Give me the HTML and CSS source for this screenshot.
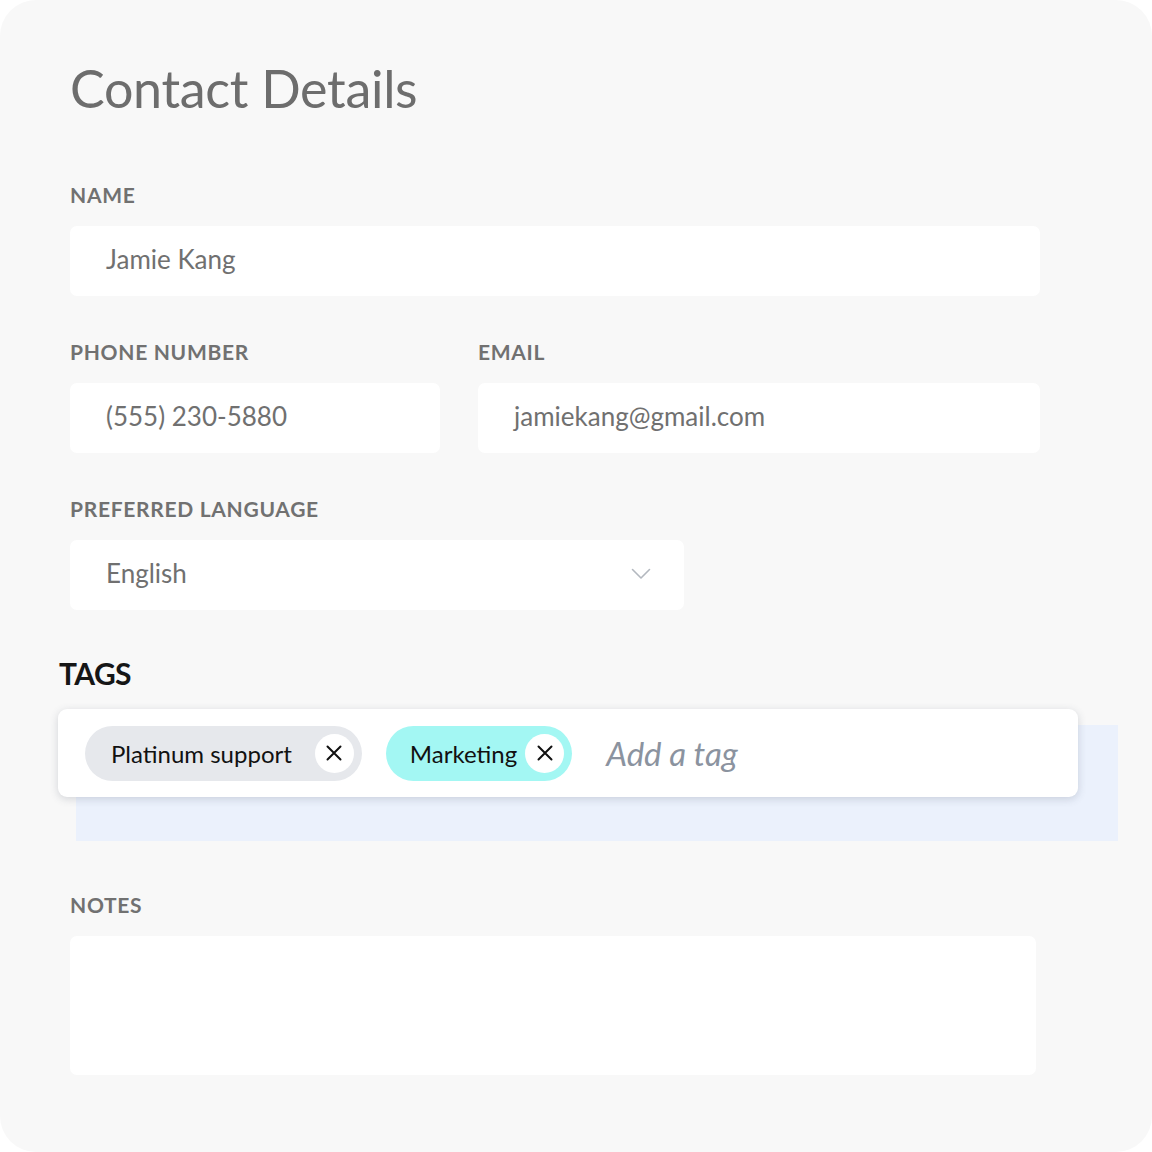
FILE: index.html
```html
<!DOCTYPE html>
<html lang="en">
<head>
<meta charset="utf-8">
<title>Contact Details</title>
<link rel="stylesheet" href="styles.css">
</head>
<body>
<div class="card">
  <h1 class="title">Contact Details</h1>

  <div class="field">
    <div class="label">NAME</div>
    <div class="input input-name">Jamie Kang</div>
  </div>

  <div class="row">
    <div class="field field-phone">
      <div class="label">PHONE NUMBER</div>
      <div class="input">(555) 230-5880</div>
    </div>
    <div class="field field-email">
      <div class="label">EMAIL</div>
      <div class="input">jamiekang@gmail.com</div>
    </div>
  </div>

  <div class="field">
    <div class="label">PREFERRED LANGUAGE</div>
    <div class="input select">
      <span>English</span>
      <svg class="chevron" width="20" height="12" viewBox="0 0 20 12" aria-hidden="true">
        <path d="M1.5 1.5 L10 10 L18.5 1.5" fill="none" stroke="#b3b8bf" stroke-width="1.6" stroke-linecap="round" stroke-linejoin="round"/>
      </svg>
    </div>
  </div>

  <div class="tags">
    <div class="tags-label">TAGS</div>
    <div class="tagbox-wrap">
      <div class="drop-zone"></div>
      <div class="tagbox">
        <div class="chip chip-gray">
          <span class="chip-text">Platinum support</span>
          <span class="chip-x">
            <svg width="16" height="16" viewBox="0 0 16 16" aria-hidden="true"><path d="M1.5 1.5 L14.5 14.5 M14.5 1.5 L1.5 14.5" stroke="#111" stroke-width="2" stroke-linecap="round"/></svg>
          </span>
        </div>
        <div class="chip chip-cyan">
          <span class="chip-text">Marketing</span>
          <span class="chip-x">
            <svg width="16" height="16" viewBox="0 0 16 16" aria-hidden="true"><path d="M1.5 1.5 L14.5 14.5 M14.5 1.5 L1.5 14.5" stroke="#111" stroke-width="2" stroke-linecap="round"/></svg>
          </span>
        </div>
        <span class="add-tag">Add a tag</span>
      </div>
    </div>
  </div>

  <div class="field">
    <div class="label">NOTES</div>
    <div class="input notes"></div>
  </div>
</div>
</body>
</html>
```

FILE: styles.css
```css
html, body {
  margin: 0;
  padding: 0;
  background: #ffffff;
}

body {
  font-family: "Lato", "Noto Sans", sans-serif;
}

.card {
  width: 1152px;
  height: 1152px;
  box-sizing: border-box;
  background: #f8f8f8;
  border-radius: 36px;
  padding: 57px 0 0 70px;
  overflow: hidden;
}

.title {
  margin: 0;
  font-size: 52px;
  line-height: 62px;
  font-weight: 400;
  color: #6d6d6d;
  letter-spacing: -0.3px;
}

.title + .field {
  margin-top: 64px;
}

.field + .field,
.row + .field,
.field + .row {
  margin-top: 44px;
}

.label {
  font-size: 21px;
  line-height: 24px;
  font-weight: 700;
  color: #717171;
  letter-spacing: 0.7px;
  margin-bottom: 19px;
}

.input {
  height: 70px;
  box-sizing: border-box;
  background: #ffffff;
  border-radius: 7px;
  padding-left: 36px;
  padding-bottom: 5px;
  display: flex;
  align-items: center;
  font-size: 26px;
  color: #707070;
}

.input-name {
  width: 970px;
}

.row {
  display: flex;
  gap: 38px;
  margin-top: 44px;
}

.row .field {
  margin-top: 0;
}

.field-phone .input {
  width: 370px;
}

.field-email .input {
  width: 562px;
}

.select {
  width: 614px;
  justify-content: space-between;
  padding-right: 33px;
}

.chevron {
  display: block;
  margin-top: 3px;
}

.tags {
  margin-top: 45px;
  margin-left: -12px;
}

.tags-label {
  font-size: 30px;
  line-height: 36px;
  font-weight: 700;
  color: #161616;
  letter-spacing: -0.6px;
  margin-left: 1px;
}

.tagbox-wrap {
  position: relative;
  margin-top: 18px;
  width: 1020px;
}

.drop-zone {
  position: absolute;
  left: 18px;
  top: 16px;
  width: 1042px;
  height: 116px;
  background: #ebf1fc;
}

.tagbox {
  position: relative;
  height: 88px;
  box-sizing: border-box;
  background: #ffffff;
  border-radius: 9px;
  box-shadow: 0 2px 8px rgba(60, 70, 90, 0.2);
  display: flex;
  align-items: center;
  padding-left: 27px;
  gap: 24px;
}

.chip {
  height: 55px;
  box-sizing: border-box;
  border-radius: 28px;
  display: flex;
  align-items: center;
  padding: 0 8px 0 26px;
  gap: 12px;
}

.chip-gray {
  background: #e6e8ec;
  gap: 23px;
}

.chip-cyan {
  background: #a3f7f3;
  padding-left: 24px;
  gap: 8px;
}

.chip-text {
  font-size: 24px;
  color: #111111;
}

.chip-x {
  width: 39px;
  height: 39px;
  border-radius: 50%;
  background: #ffffff;
  display: flex;
  align-items: center;
  justify-content: center;
}

.chip-x svg {
  display: block;
}

.add-tag {
  margin-left: 10px;
  font-size: 33px;
  font-style: italic;
  color: #8b939f;
}

.tags + .field {
  margin-top: 96px;
}

.notes {
  width: 966px;
  height: 139px;
}
```
